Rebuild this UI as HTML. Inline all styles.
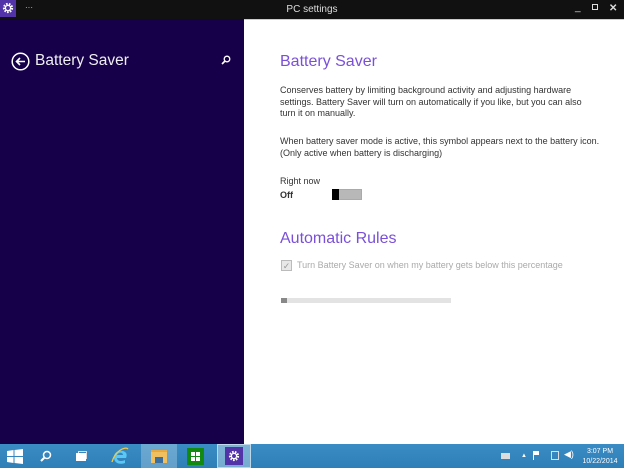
<!DOCTYPE html>
<html><head><meta charset="utf-8"><style>
*{margin:0;padding:0;box-sizing:border-box}
body{width:624px;height:468px;overflow:hidden;font-family:"Liberation Sans",sans-serif;background:#fff;position:relative}
.title{position:absolute;left:0;top:0;width:624px;height:19px;background:#111;color:#ddd;font-size:10px}
.left{position:absolute;left:0;top:19px;width:244px;height:425px;background:#16004a}
.right{position:absolute;left:244px;top:19px;width:380px;height:425px;background:#fff;border-top:1px solid #ccc}
.task{position:absolute;left:0;top:444px;width:624px;height:24px;background:linear-gradient(#3a8cc4,#2e7fb8)}
h1{position:absolute;font-weight:normal;color:#7a50d8;font-size:16px}
p{position:absolute;font-size:9px;color:#333;line-height:11.6px;white-space:nowrap}
</style></head><body>
<div class="title">
 <div style="position:absolute;left:0;top:0;width:16px;height:17px;background:#5233a8"></div>
 <svg style="position:absolute;left:2px;top:2px" width="12" height="12" viewBox="0 0 12 12"><circle cx="6" cy="6" r="4" fill="none" stroke="#fff" stroke-width="2.2" stroke-dasharray="1.6 1.2"/><circle cx="6" cy="6" r="2.6" fill="none" stroke="#fff" stroke-width="1.3"/></svg>
 <div style="position:absolute;left:25px;top:3px;font-size:8px;color:#ccc">···</div>
 <div style="position:absolute;left:0;width:624px;top:4px;text-align:center">PC settings</div>
 <div style="position:absolute;left:575px;top:2px;font-size:10px">_</div>
 <div style="position:absolute;left:592px;top:4px;width:6px;height:6px;border:1px solid #ddd"></div>
 <div style="position:absolute;left:609px;top:3px;font-size:10px;font-weight:bold">✕</div>
</div>
<div class="left">
 <svg style="position:absolute;left:11px;top:33px" width="19" height="19" viewBox="0 0 19 19"><circle cx="9.5" cy="9.5" r="8.3" fill="none" stroke="#fff" stroke-width="1.5"/><path d="M14 9.5H5.5M9 6L5.5 9.5L9 13" fill="none" stroke="#fff" stroke-width="1.6"/></svg>
 <div style="position:absolute;left:35px;top:33px;color:#eee;font-size:15.5px">Battery Saver</div>
 <svg style="position:absolute;left:221px;top:36px" width="10" height="10" viewBox="0 0 10 10"><circle cx="6" cy="4" r="2.8" fill="none" stroke="#fff" stroke-width="1.3"/><path d="M4 6L1 9" stroke="#fff" stroke-width="1.6"/></svg>
</div>
<div class="right">
 <h1 style="left:36px;top:33px">Battery Saver</h1>
 <p style="left:36px;top:65px">Conserves battery by limiting background activity and adjusting hardware<br>settings. Battery Saver will turn on automatically if you like, but you can also<br>turn it on manually.</p>
 <p style="left:36px;top:116px">When battery saver mode is active, this symbol appears next to the battery icon.<br>(Only active when battery is discharging)</p>
 <p style="left:36px;top:156px">Right now</p>
 <p style="left:36px;top:170px;font-weight:bold">Off</p>
 <div style="position:absolute;left:88px;top:169px;width:30px;height:11px;background:#b8b8b8;border:1px solid #aaa"></div>
 <div style="position:absolute;left:88px;top:169px;width:7px;height:11px;background:#000"></div>
 <h1 style="left:36px;top:210px">Automatic Rules</h1>
 <div style="position:absolute;left:37px;top:240px;width:11px;height:11px;border:1px solid #bbb;background:#e8e8e8;color:#999;font-size:9px;line-height:10px;text-align:center">✓</div>
 <p style="left:53px;top:240px;color:#aaa">Turn Battery Saver on when my battery gets below this percentage</p>
 <div style="position:absolute;left:37px;top:278px;width:170px;height:5px;background:#e3e3e3"></div>
 <div style="position:absolute;left:37px;top:278px;width:6px;height:5px;background:#888"></div>
</div>
<div class="task">
 <svg style="position:absolute;left:7px;top:5px" width="16" height="15" viewBox="0 0 16 15"><path d="M0 2L6.5 1V7H0ZM7.5 1L16 0V7H7.5ZM0 8H6.5V14L0 13ZM7.5 8H16V15L7.5 14Z" fill="#fff"/></svg>
 <svg style="position:absolute;left:40px;top:6px" width="12" height="12" viewBox="0 0 12 12"><circle cx="7" cy="5" r="3.5" fill="none" stroke="#fff" stroke-width="1.5"/><path d="M4.5 7.5L1 11" stroke="#fff" stroke-width="2"/></svg>
 <div style="position:absolute;left:78px;top:7px;width:9px;height:8px;border:1px solid #ddd"></div>
 <div style="position:absolute;left:76px;top:9px;width:10px;height:8px;background:#fff"></div>
 <svg style="position:absolute;left:110px;top:2px" width="20" height="20" viewBox="0 0 20 20"><path d="M16 12H7c0 3 4 4 8 2v3c-6 2-11 0-11-6 0-5 6-8 11-5 2 1 2 4 1 6zM7 9h6c0-3-5-3-6 0z" fill="#5ac8f5"/><path d="M2 16C5 5 15 0 18 3" fill="none" stroke="#f5c842" stroke-width="1.3"/></svg>
 <div style="position:absolute;left:141px;top:0;width:36px;height:24px;background:rgba(255,255,255,.25)"></div>
 <div style="position:absolute;left:151px;top:6px;width:16px;height:13px;background:#f0c060;border-top:2px solid #e8a840"></div>
 <div style="position:absolute;left:155px;top:13px;width:8px;height:6px;background:#3a6fa0"></div>
 <div style="position:absolute;left:187px;top:4px;width:17px;height:17px;background:#128a12"></div>
 <svg style="position:absolute;left:191px;top:8px" width="9" height="9" viewBox="0 0 9 9"><path d="M0 0h4v4H0zM5 0h4v4H5zM0 5h4v4H0zM5 5h4v4H5z" fill="#fff"/></svg>
 <div style="position:absolute;left:217px;top:0;width:34px;height:24px;background:rgba(255,255,255,.35);border:1px solid rgba(255,255,255,.5)"></div>
 <div style="position:absolute;left:225px;top:3px;width:18px;height:18px;background:#5233a8"></div>
 <svg style="position:absolute;left:228px;top:6px" width="12" height="12" viewBox="0 0 12 12"><circle cx="6" cy="6" r="4" fill="none" stroke="#fff" stroke-width="2.2" stroke-dasharray="1.6 1.2"/><circle cx="6" cy="6" r="2.6" fill="none" stroke="#fff" stroke-width="1.3"/></svg>
 <div style="position:absolute;left:501px;top:9px;width:9px;height:6px;background:#ddd"></div>
 <div style="position:absolute;left:521px;top:9px;font-size:6px;color:#fff">▲</div>
 <div style="position:absolute;left:533px;top:7px;width:8px;height:9px;border-left:1px solid #fff"><div style="width:5px;height:4px;background:#fff"></div></div>
 <div style="position:absolute;left:551px;top:7px;width:8px;height:9px;border:1px solid #ddd"></div>
 <div style="position:absolute;left:564px;top:5px;font-size:9px;color:#fff">◀)</div>
 <div style="position:absolute;left:578px;top:3px;width:44px;text-align:center;font-size:7px;color:#fff;line-height:10px">3:07 PM<br>10/22/2014</div>
</div>
</body></html>
